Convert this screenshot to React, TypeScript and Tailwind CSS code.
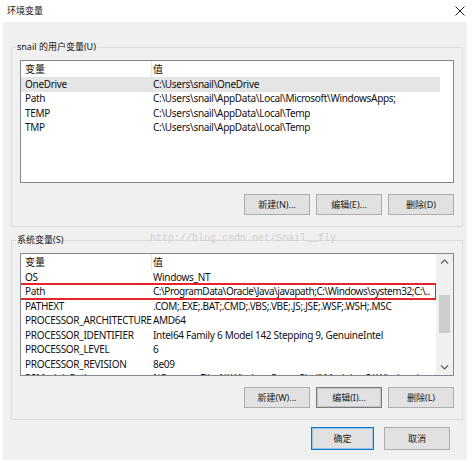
import React from "react";

type Row = { name: string; value: string; selected?: boolean; marked?: boolean };

const userVars: Row[] = [
  { name: "OneDrive", value: String.raw`C:\Users\snail\OneDrive`, selected: true },
  { name: "Path", value: String.raw`C:\Users\snail\AppData\Local\Microsoft\WindowsApps;` },
  { name: "TEMP", value: String.raw`C:\Users\snail\AppData\Local\Temp` },
  { name: "TMP", value: String.raw`C:\Users\snail\AppData\Local\Temp` },
];

const systemVars: Row[] = [
  { name: "OS", value: "Windows_NT" },
  { name: "Path", value: String.raw`C:\ProgramData\Oracle\Java\javapath;C:\Windows\system32;C:\..`, marked: true },
  { name: "PATHEXT", value: ".COM;.EXE;.BAT;.CMD;.VBS;.VBE;.JS;.JSE;.WSF;.WSH;.MSC" },
  { name: "PROCESSOR_ARCHITECTURE", value: "AMD64" },
  { name: "PROCESSOR_IDENTIFIER", value: "Intel64 Family 6 Model 142 Stepping 9, GenuineIntel" },
  { name: "PROCESSOR_LEVEL", value: "6" },
  { name: "PROCESSOR_REVISION", value: "8e09" },
  { name: "PSModulePath", value: String.raw`%ProgramFiles%\WindowsPowerShell\Modules;C:\Windows\system32\...` },
];

function Btn({ label, focused }: { label: string; focused?: boolean }) {
  return (
    <button
      className={
        "w-[66px] h-[21px] bg-[#e1e1e1] border text-[9px] text-[#1a1a1a] leading-none flex items-center justify-center " +
        (focused ? "border-[#7a7a7a] shadow-[inset_0_0_0_1px_#c4c4c4]" : "border-[#adadad]")
      }
    >
      {label}
    </button>
  );
}

function VarList({ rows, scroll, rowWidth }: { rows: Row[]; scroll?: boolean; rowWidth: string }) {
  return (
    <div className="h-[123px] bg-white border border-[#828790] flex overflow-hidden">
      <div className="flex-1 overflow-hidden">
        <div className={"flex h-[16px] items-center " + rowWidth}>
          <div className="w-[131px] pl-[4px] border-r border-[#e5e5e5] h-full flex items-center">变量</div>
          <div className="pl-[1px]">值</div>
        </div>
        {rows.map((r, i) => (
          <div
            key={i}
            className={
              "relative flex h-[14.5px] items-center whitespace-nowrap tracking-[-0.3px] " +
              rowWidth +
              (r.selected ? " bg-[#e5e5e5]" : "")
            }
          >
            <div className="w-[131px] pl-[4px] overflow-hidden">{r.name}</div>
            <div className={"pl-[1px] flex-1 overflow-hidden" + (r.marked ? " tracking-[-0.45px]" : "")}>{r.value}</div>
            {r.marked && (
              <span className="absolute -left-[2px] right-0 -top-[1.5px] -bottom-[0.5px] border-2 border-[#e3262d]" />
            )}
          </div>
        ))}
      </div>
      {scroll && (
        <div className="w-[17px] bg-[#f0f0f0] flex flex-col items-center">
          <svg width="9" height="10" viewBox="0 0 9 10" className="mt-[3px]">
            <path d="M1 6.5 L4.5 3 L8 6.5" stroke="#606060" strokeWidth="1.2" fill="none" />
          </svg>
          <div className="w-[11px] h-[38px] bg-[#cdcdcd] mt-[28px]" />
          <div className="flex-1" />
          <svg width="9" height="10" viewBox="0 0 9 10" className="mb-[3px]">
            <path d="M1 3.5 L4.5 7 L8 3.5" stroke="#606060" strokeWidth="1.2" fill="none" />
          </svg>
        </div>
      )}
    </div>
  );
}

function Group({ label, children }: { label: string; children: React.ReactNode }) {
  return (
    <div className="relative ml-[8px] w-[452px] border border-[#dcdcdc] px-[8px] pt-[12px] pb-[11px]">
      <span className="absolute -top-[9px] left-[4px] px-[1px] bg-[#f0f0f0] leading-[16px] text-[9px]">{label}</span>
      {children}
    </div>
  );
}

export default function App() {
  return (
    <div className="w-[474px] h-[463px] bg-white overflow-hidden relative text-[10px] text-[#111] font-['Noto_Sans','Noto_Sans_CJK_SC',sans-serif]">
      <div className="h-[22px] flex items-center justify-between pl-[7px] pr-[9px]">
        <span className="text-[9px]">环境变量</span>
        <svg width="10" height="10" viewBox="0 0 10 10">
          <path d="M0.5 0.5 L9.5 9.5 M9.5 0.5 L0.5 9.5" stroke="#222" strokeWidth="1" />
        </svg>
      </div>
      <div className="ml-[3px] w-[464px] h-[438px] bg-[#f0f0f0] pt-[25px]">
        <Group label="snail 的用户变量(U)">
          <VarList rows={userVars} rowWidth="w-[419px]" />
          <div className="flex justify-end gap-[6px] mt-[11px]">
            <Btn label="新建(N)..." />
            <Btn label="编辑(E)..." />
            <Btn label="删除(D)" />
          </div>
        </Group>
        <div className="mt-[13px]">
          <Group label="系统变量(S)">
            <VarList rows={systemVars} scroll rowWidth="w-[416px]" />
            <div className="flex justify-end gap-[6px] mt-[11px]">
              <Btn label="新建(W)..." />
              <Btn label="编辑(I)..." focused />
              <Btn label="删除(L)" />
            </div>
          </Group>
        </div>
        <div className="flex justify-end gap-[10px] mt-[7px] pr-[17px]">
          <button className="w-[63px] h-[23px] bg-[#e1e1e1] border border-[#0078d7] shadow-[inset_0_0_0_1px_#9cc4e8] text-[9px] text-[#1a1a1a]">
            确定
          </button>
          <button className="w-[66px] h-[23px] bg-[#e1e1e1] border border-[#adadad] text-[9px] text-[#1a1a1a]">
            取消
          </button>
        </div>
      </div>
      <span className="absolute left-[150px] top-[232px] font-['Liberation_Mono',monospace] text-[10px] leading-[14px] text-[#cfcfcf] pointer-events-none">
        http://blog.csdn.net/Snail__fly
      </span>
    </div>
  );
}
